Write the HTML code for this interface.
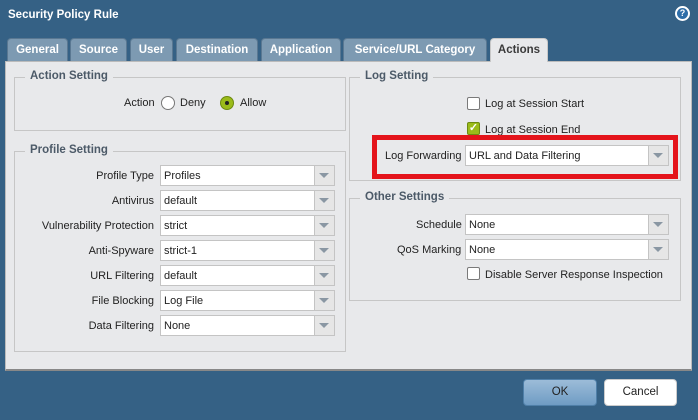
<!DOCTYPE html>
<html><head><meta charset="utf-8"><style>
*{box-sizing:border-box;margin:0;padding:0}
body{width:698px;height:420px;background:#356185;font-family:"Liberation Sans",sans-serif;font-size:11px;color:#222;position:relative;overflow:hidden}
.a{position:absolute}
.title{left:8px;top:9px;color:#fff;font-weight:bold;font-size:11.5px}
.help{left:675px;top:6px;width:15px;height:15px;border-radius:50%;background:#fff;}
.help div{position:absolute;left:2px;top:2px;width:11px;height:11px;border-radius:50%;background:#2f6ea8;color:#fff;font-size:9px;font-weight:bold;text-align:center;line-height:11px}
.tab{top:38px;height:23px;background:#7d9ab2;border:1px solid #5a7892;border-bottom:none;border-radius:4px 4px 0 0;color:#fff;font-weight:bold;font-size:11.5px;text-align:center;line-height:22px}
.tab.on{background:#e8e9eb;color:#3a3a3a;height:24px;border-color:#c8c8c8}
.panel{left:5px;top:61px;width:687px;height:310px;background:#e8e9eb;border:1px solid #bbb;border-bottom:2px solid #888}
.fs{border:1px solid #c6c6c6}
.lg{background:#e8e9eb;padding:0 5px;color:#4c5a68;font-weight:bold;font-size:11.5px}
.lbl{text-align:right;width:150px}
.sel{height:21px;background:#fff;border:1px solid #c4c4c4;padding-left:3px;line-height:21px}
.sel:after{content:"";position:absolute;right:0;top:0;width:19px;height:19px;background:#e6e6e6;border-left:1px solid #c4c4c4}
.sel i{position:absolute;right:5px;top:7px;width:0;height:0;border-left:5px solid transparent;border-right:5px solid transparent;border-top:5px solid #8a97a3;z-index:2}
.cb{width:13px;height:13px;background:#fff;border:1px solid #7a7a7a;border-radius:2px}
.btn{top:379px;height:27px;border-radius:4px;text-align:center;line-height:25px;font-size:11.5px}
</style></head><body>
<div class="a title">Security Policy Rule</div>
<div class="a help"><div>?</div></div>
<div class="a tab" style="left:7px;width:61px">General</div>
<div class="a tab" style="left:70px;width:57px">Source</div>
<div class="a tab" style="left:130px;width:43px">User</div>
<div class="a tab" style="left:176px;width:82px">Destination</div>
<div class="a tab" style="left:261px;width:80px">Application</div>
<div class="a tab" style="left:343px;width:144px">Service/URL Category</div>
<div class="a panel"></div>
<div class="a tab on" style="left:490px;width:58px">Actions</div>

<div class="a fs" style="left:14px;top:77px;width:332px;height:54px"></div>
<div class="a lg" style="left:25px;top:70px">Action Setting</div>
<div class="a" style="left:124px;top:97px">Action</div>
<div class="a" style="left:161px;top:96px;width:14px;height:14px;border-radius:50%;background:#fff;border:1px solid #777"></div>
<div class="a" style="left:180px;top:97px">Deny</div>
<div class="a" style="left:220px;top:96px;width:14px;height:14px;border-radius:50%;background:#9bbb1a;border:1px solid #6d8a10"></div>
<div class="a" style="left:225px;top:101px;width:4px;height:4px;border-radius:50%;background:#222"></div>
<div class="a" style="left:240px;top:97px">Allow</div>

<div class="a fs" style="left:14px;top:151px;width:332px;height:201px"></div>
<div class="a lg" style="left:25px;top:144px">Profile Setting</div>
<div class="a lbl" style="left:4px;top:170px">Profile Type</div><div class="a sel" style="left:160px;top:165px;width:175px">Profiles<i></i></div>
<div class="a lbl" style="left:4px;top:195px">Antivirus</div><div class="a sel" style="left:160px;top:190px;width:175px">default<i></i></div>
<div class="a lbl" style="left:4px;top:220px">Vulnerability Protection</div><div class="a sel" style="left:160px;top:215px;width:175px">strict<i></i></div>
<div class="a lbl" style="left:4px;top:245px">Anti-Spyware</div><div class="a sel" style="left:160px;top:240px;width:175px">strict-1<i></i></div>
<div class="a lbl" style="left:4px;top:270px">URL Filtering</div><div class="a sel" style="left:160px;top:265px;width:175px">default<i></i></div>
<div class="a lbl" style="left:4px;top:295px">File Blocking</div><div class="a sel" style="left:160px;top:290px;width:175px">Log File<i></i></div>
<div class="a lbl" style="left:4px;top:320px">Data Filtering</div><div class="a sel" style="left:160px;top:315px;width:175px">None<i></i></div>

<div class="a fs" style="left:349px;top:77px;width:332px;height:104px"></div>
<div class="a lg" style="left:360px;top:70px">Log Setting</div>
<div class="a cb" style="left:467px;top:97px"></div>
<div class="a" style="left:485px;top:98px">Log at Session Start</div>
<div class="a cb" style="left:467px;top:122px;background:#9bbb1a;border-color:#6d8a10;color:#fff;font-weight:bold;font-size:11px;line-height:11px;text-align:center">✓</div>
<div class="a" style="left:485px;top:124px">Log at Session End</div>
<div class="a" style="left:372px;top:135px;width:306px;height:44px;border:5px solid #e4141b;background:#e8e9eb"></div>
<div class="a" style="left:385px;top:150px">Log Forwarding</div>
<div class="a sel" style="left:465px;top:145px;width:204px">URL and Data Filtering<i></i></div>

<div class="a fs" style="left:349px;top:198px;width:332px;height:103px"></div>
<div class="a lg" style="left:360px;top:191px">Other Settings</div>
<div class="a" style="left:416px;top:219px">Schedule</div>
<div class="a sel" style="left:465px;top:214px;width:204px">None<i></i></div>
<div class="a" style="left:397px;top:244px">QoS Marking</div>
<div class="a sel" style="left:465px;top:239px;width:204px">None<i></i></div>
<div class="a cb" style="left:467px;top:267px"></div>
<div class="a" style="left:485px;top:269px">Disable Server Response Inspection</div>

<div class="a btn" style="left:523px;width:74px;background:linear-gradient(#9cbcd8,#6f9cc4);border:1px solid #4f7fa8;color:#222">OK</div>
<div class="a btn" style="left:604px;width:73px;background:#fff;border:1px solid #ccc">Cancel</div>
</body></html>
